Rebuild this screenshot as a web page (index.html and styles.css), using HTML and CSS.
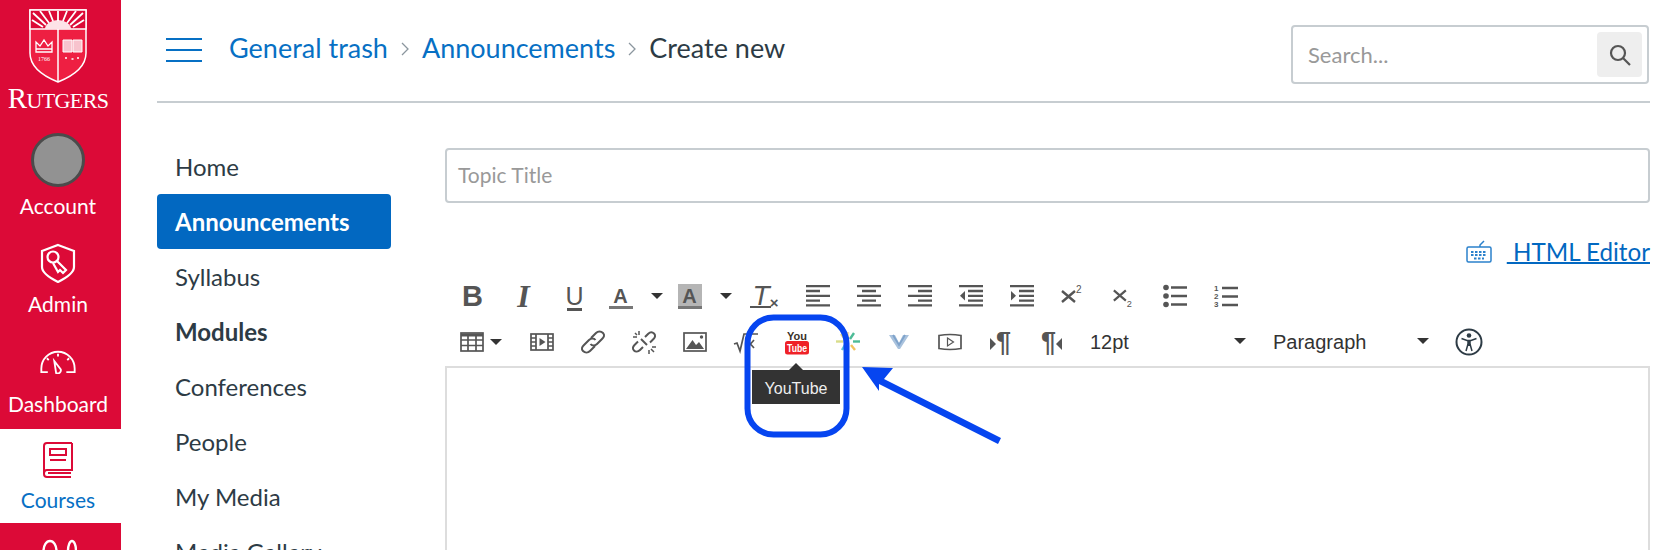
FILE: index.html
```html
<!DOCTYPE html>
<html lang="en">
<head>
<meta charset="utf-8">
<title>Create new</title>
<link rel="stylesheet" href="styles.css">
</head>
<body>
<div class="app">
  <aside class="sidebar">
    <div class="logo">
      <svg class="shield" viewBox="0 0 58 74" width="58" height="74">
        <path d="M1 1H57V44C57 58 44 67 29 73C14 67 1 58 1 44Z" fill="#ee1f42" stroke="#fff" stroke-width="1.5"/>
        <path d="M1 1H57V20H1Z" fill="#dc0a37" stroke="#fff" stroke-width="1.5"/>
        <path d="M29 19V73" stroke="#fff" stroke-width="1.5"/>
        <path d="M16 20a13 9 0 0 1 26 0Z" fill="#fde3e8"/>
        <path d="M29 12V2M24 12L20 2M34 12L38 2M20 14L11 2M38 14L47 2M17 16L4 4M41 16L54 4M14 18L3 11M44 18L55 11" stroke="#fff" stroke-width="1.8"/>
        <path d="M7 43V33L11 37L15 31L19 37L23 33V43ZM7 40H23" fill="none" stroke="#fff" stroke-width="1.3"/>
        <text class="year" x="15" y="52" text-anchor="middle">1766</text>
        <path d="M34 31H43V43H34ZM44 31H53V43H44Z" fill="#f7c3cd" stroke="#fff"/>
        <path d="M36 49h2M42.500 50h2M48 49h2" stroke="#fff" stroke-width="1.6"/>
      </svg>
      <div class="wordmark"><span class="big-r">R</span>UTGERS</div>
    </div>
    <a class="side-item account"><span class="avatar"></span><span class="side-label">Account</span></a>
    <a class="side-item admin">
      <svg viewBox="0 0 36 40" width="36" height="40" fill="none" stroke="#fff" stroke-width="2.200">
        <path d="M18 2L34 8V24C34 30 26 35 18 39C10 35 2 30 2 24V8Z"/>
        <circle cx="13" cy="14" r="5.500"/>
        <path d="M17 18L26 27L23 30L20 27L18 29L13 20"/>
      </svg>
      <span class="side-label">Admin</span>
    </a>
    <a class="side-item dashboard">
      <svg viewBox="0 0 40 27" width="38" height="25" fill="none" stroke="#fff" stroke-width="2">
        <path d="M9 25H2V21A18 18 0 0 1 38 21V25H29"/>
        <path d="M16 13L23 22A3.500 3.500 0 0 1 18 26Z"/>
        <path d="M20 5V8M8 10L10 12M32 10L30 12"/>
      </svg>
      <span class="side-label">Dashboard</span>
    </a>
    <a class="side-item courses">
      <svg viewBox="0 0 30 36" width="30" height="36" fill="none" stroke="#dc0a37" stroke-width="2">
        <path d="M29 1H4C2 1 1 2 1 4V32C1 34 2 35 4 35H28M29 1V28H4C2 28 1 30 1 32M28 31H5"/>
        <path d="M7 7H23V13H7ZM7 18H23"/>
      </svg>
      <span class="side-label">Courses</span>
    </a>
    <a class="side-item groups">
      <svg viewBox="0 0 38 30" width="38" height="30" fill="none" stroke="#fff" stroke-width="2.400">
        <ellipse cx="11" cy="12" rx="6.500" ry="10"/><ellipse cx="33" cy="12" rx="4" ry="10"/>
      </svg>
    </a>
  </aside>

  <main class="page">
    <header class="topbar">
      <button class="hamburger" aria-label="Menu"><i></i><i></i><i></i></button>
      <nav class="crumbs">
        <a>General trash</a>
        <svg class="sep" viewBox="0 0 10 14" width="10" height="14"><path d="M2 1L8 7L2 13"/></svg>
        <a>Announcements</a>
        <svg class="sep" viewBox="0 0 10 14" width="10" height="14"><path d="M2 1L8 7L2 13"/></svg>
        <span class="current">Create new</span>
      </nav>
      <div class="search">
        <span class="search-text">Search...</span>
        <span class="search-btn">
          <svg viewBox="0 0 24 24" width="24" height="24" fill="none" stroke="#555" stroke-width="2.200"><circle cx="10" cy="10" r="7"/><path d="M15 15L22 22"/></svg>
        </span>
      </div>
    </header>

    <div class="layout">
      <nav class="course-nav">
        <a>Home</a>
        <a class="active">Announcements</a>
        <a>Syllabus</a>
        <a class="strong">Modules</a>
        <a>Conferences</a>
        <a>People</a>
        <a>My Media</a>
        <a>Media Gallery</a>
      </nav>

      <section class="content">
        <div class="topic">Topic Title</div>
        <div class="editor-switch">
          <svg viewBox="0 0 26 24" width="26" height="24" fill="none" stroke="#2b81cc" stroke-width="1.500">
            <rect x="1" y="8" width="24" height="15" rx="1.500"/>
            <path d="M14 8V6L18 2"/>
            <path d="M5 13h16M5 16h16M8 19.500h10" stroke-width="2.200" stroke-dasharray="2.500 1.500"/>
          </svg>
          <a>&nbsp;HTML Editor</a>
        </div>

        <div class="toolbar">
          <div class="tool-row">
            <span class="tool glyph bold">B</span>
            <span class="tool glyph italic">I</span>
            <span class="tool glyph under">U</span>
            <span class="tool color-first"><span class="color-a">A</span></span><span class="caret-slot"><i class="caret"></i></span>
            <span class="tool color-second"><span class="color-a shaded">A</span></span><span class="caret-slot"><i class="caret"></i></span>
            <span class="tool clear"><span class="clear-t">T</span><span class="clear-x">×</span></span>
            <span class="tool"><svg class="ico lines" viewBox="0 0 24 22"><path d="M0 1.200H24M0 6H14M0 10.800H24M0 15.600H14M0 20.400H24"/></svg></span>
            <span class="tool"><svg class="ico lines" viewBox="0 0 24 22"><path d="M0 1.200H24M5 6H19M0 10.800H24M5 15.600H19M0 20.400H24"/></svg></span>
            <span class="tool"><svg class="ico lines" viewBox="0 0 24 22"><path d="M0 1.200H24M10 6H24M0 10.800H24M10 15.600H24M0 20.400H24"/></svg></span>
            <span class="tool"><svg class="ico lines" viewBox="0 0 24 22"><path d="M0 1.200H24M9 6H24M9 10.800H24M9 15.600H24M0 20.400H24"/><path class="fill" d="M6 6V15.600L1 10.800Z"/></svg></span>
            <span class="tool"><svg class="ico lines" viewBox="0 0 24 22"><path d="M0 1.200H24M9 6H24M9 10.800H24M9 15.600H24M0 20.400H24"/><path class="fill" d="M1 6V15.600L6 10.800Z"/></svg></span>
            <span class="tool"><svg class="ico square" viewBox="0 0 24 24"><path d="M1 7L14 18M14 7L1 18"/><text class="script-num" x="15" y="9">2</text></svg></span>
            <span class="tool"><svg class="ico square" viewBox="0 0 24 26"><path d="M1 7L14 18M14 7L1 18"/><text class="script-num" x="15" y="25">2</text></svg></span>
            <span class="tool"><svg class="ico" viewBox="0 0 24 22"><circle class="fill" cx="3" cy="2.500" r="2.800"/><circle class="fill" cx="3" cy="11" r="2.800"/><circle class="fill" cx="3" cy="19.500" r="2.800"/><path d="M8 2.500H24M8 11H24M8 19.500H24"/></svg></span>
            <span class="tool"><svg class="ico square" viewBox="0 0 24 24"><text class="nums" x="0" y="7">1</text><text class="nums" x="0" y="15">2</text><text class="nums" x="0" y="23">3</text><path d="M8 4H24M8 12.500H24M8 21H24"/></svg></span>
          </div>
          <div class="tool-row">
            <span class="tool table-tool"><svg class="ico thin" viewBox="0 0 24 20"><rect x="1" y="1" width="22" height="18"/><path d="M1 3H23" stroke-width="3"/><path d="M1 8H23M1 13.500H23M8 2V19M16 2V19"/></svg><i class="caret"></i></span>
            <span class="tool"><svg class="ico thin" viewBox="0 0 24 18"><rect x="1" y="1" width="22" height="16"/><path d="M6 1V17M18 1V17M1 5H6M1 9H6M1 13H6M18 5H23M18 9H23M18 13H23"/><path class="fill" d="M9.500 5L15.500 9L9.500 13Z"/></svg></span>
            <span class="tool"><svg class="ico thin wide" viewBox="0 0 24 24"><path d="M10 8L15 3C17 1 20 1 22 3S23 7 21 9L16 14C14 16 11 16 9.500 14"/><path d="M14 16L9 21C7 23 4 23 2 21S1 17 3 15L8 10C10 8 13 8 14.500 10"/></svg></span>
            <span class="tool"><svg class="ico thin wide" viewBox="0 0 24 24"><path d="M13 7L16 4C18 2 20.500 2 22 3.500S23.500 7 21.500 9L18 12.500"/><path d="M11 17L8 20C6 22 3.500 22 2 20.500S.5 17 2.500 15L6 11.500"/><path d="M9 9L15 15"/><path d="M7 1V5M1 7H5M19 19L22 22M17 20V24M20 17H24M3 3L5 5" stroke-width="1.500"/></svg></span>
            <span class="tool"><svg class="ico thin" viewBox="0 0 24 20"><rect x="1" y="1" width="22" height="18"/><path class="fill" d="M3 17L9.500 8L13 13L16 10L21 17Z"/><circle class="fill" cx="18.500" cy="5" r="1.700"/></svg></span>
            <span class="tool"><svg class="ico thin" viewBox="0 0 24 20"><path d="M0 12L3 11L6 19L10 2H24"/><path d="M13 8L20 16M20 8L13 16"/></svg></span>
            <span class="tool"><svg class="yt" viewBox="0 -2 24 26" width="24" height="26"><text class="yt-you" x="12" y="8.500" text-anchor="middle">You</text><rect x="0" y="10" width="24" height="13.500" rx="2.500" fill="#ef2127"/><text class="yt-tube" x="12" y="21" text-anchor="middle" textLength="20" lengthAdjust="spacingAndGlyphs">Tube</text></svg></span>
            <span class="tool"><svg class="burst" viewBox="0 0 24 24" width="24" height="24" stroke-width="2.400" fill="none"><path stroke="#d9dd8b" d="M0 11.500H7"/><path stroke="#4dbb96" d="M17 11.500H24"/><path stroke="#4cbb96" d="M14 9L18 3"/><path stroke="#f2c35f" d="M12 2V8" opacity=".5"/><path stroke="#58c4dc" d="M9.500 14L6 20"/><path stroke="#f2c35f" d="M15 15L19 20"/><path stroke="#4cc3dc" d="M12 16V22" opacity=".5"/><path stroke="#e6d88a" d="M9 9L5 4"/></svg></span>
            <span class="tool"><svg viewBox="0 0 20 16" width="20" height="16"><path d="M0 1H6L10 9L14 1H20L11 15H9Z" fill="#a9c2dd"/><path d="M4 1L10 11L16 1" fill="none" stroke="#7fa3cb" stroke-width="1.800"/></svg></span>
            <span class="tool"><svg class="ico thin" viewBox="0 0 24 18"><path d="M1 2.500Q12 .5 23 2.500V15.500Q12 17.500 1 15.500Z"/><path d="M9.500 5L15.500 9L9.500 13Z" stroke-width="1.200"/></svg></span>
            <span class="tool"><i class="tri-r"></i><span class="pilcrow">¶</span></span>
            <span class="tool"><span class="pilcrow">¶</span><i class="tri-l"></i></span>
            <span class="select"><span>12pt</span><i class="caret"></i></span>
            <span class="select"><span>Paragraph</span><i class="caret"></i></span>
            <span class="tool"><svg viewBox="0 0 28 28" width="28" height="28" fill="none" stroke="#2d3b45"><circle cx="14" cy="14" r="12.500" stroke-width="2"/><circle cx="14" cy="7.500" r="2.300" fill="#2d3b45" stroke="none"/><path d="M6.500 10.500L12 12.500H16L21.500 10.500M11 23L13 16M17 23L15 16" stroke-width="1.500"/><path d="M14 12V18" stroke-width="3.500"/></svg></span>
          </div>
          <div class="tooltip">YouTube</div>
        </div>
        <div class="editor"></div>
      </section>
    </div>
  </main>
</div>

<svg class="markup" viewBox="0 0 1677 550" width="1677" height="550" aria-hidden="true">
  <rect x="747.500" y="317.500" width="99" height="117" rx="26" fill="none" stroke="#0645f0" stroke-width="6"/>
  <path d="M862 367L893 368L884 379L1001 438L998 444L879 384L879 391Z" fill="#0645f0"/>
</svg>
</body>
</html>
```
FILE: styles.css
```css
* { box-sizing: border-box; }
html, body { margin: 0; height: 550px; overflow: hidden; background: #fff; }
body { font-family: Lato, "Liberation Sans", sans-serif; color: #2d3b45; position: relative; }
a { color: inherit; text-decoration: none; }
i { font-style: normal; }

.app { display: flex; height: 550px; overflow: hidden; }

/* Global sidebar */
.sidebar { width: 121px; flex: none; background: #dc0a37; color: #fff; display: flex; flex-direction: column; overflow: hidden; }
.logo { height: 122px; flex: none; padding: 9px 5px 0 0; display: flex; flex-direction: column; align-items: center; width: 100%; }
.shield { display: block; flex: none; }
.year { font: 6px "Liberation Serif", serif; fill: #fff; }
.wordmark { font: 22px/26px "Liberation Serif", serif; color: #fff; letter-spacing: -.6px; margin-top: 2px; white-space: nowrap; }
.big-r { font-size: 29px; }
.side-item { width: 100%; display: flex; flex-direction: column; align-items: center; font-size: 21px; padding-right: 5px; flex: none; }
.side-label { line-height: 24px; }
.account { height: 99px; padding-top: 11px; }
.avatar { width: 54px; height: 54px; border-radius: 50%; background: #929292; border: 3px solid #4b4b4b; margin-bottom: 7px; flex: none; }
.admin { height: 98px; padding-top: 22px; }
.admin .side-label { margin-top: 9px; }
.dashboard { height: 110px; padding-top: 30px; }
.dashboard .side-label { margin-top: 18px; }
.courses { height: 94px; background: #fff; color: #0770c4; padding-top: 13px; }
.courses .side-label { margin-top: 10px; }
.groups { padding-top: 16px; }

/* Page */
.page { flex: 1; min-width: 0; padding: 0 27px 0 36px; }
.topbar { height: 103px; border-bottom: 2px solid #c7cdd1; display: flex; align-items: center; padding: 0 1px 5px 9px; }
.hamburger { width: 36px; height: 24px; padding: 0; border: 0; background: none; display: flex; flex-direction: column; justify-content: space-between; margin: 4px 27px 0 0; }
.hamburger i { display: block; height: 2px; background: #0770c4; }
.crumbs { display: flex; align-items: center; font-size: 27px; color: #0770c4; flex: 1; margin-top: -1px; }
.sep { fill: none; stroke: #8b969e; stroke-width: 1.300; margin: 2px 12px 0; flex: none; }
.current { color: #2d3b45; }
.search { width: 358px; height: 59px; border: 2px solid #c7cdd1; border-radius: 4px; display: flex; align-items: center; justify-content: space-between; padding: 0 5px 0 15px; margin-top: 13px; }
.search-text { font-size: 22px; color: #999; }
.search-btn { width: 45px; height: 45px; background: #eee; border-radius: 4px; display: flex; align-items: center; justify-content: center; }

.layout { display: flex; gap: 54px; }

/* Course nav */
.course-nav { width: 234px; flex: none; padding-top: 36px; display: flex; flex-direction: column; }
.course-nav a { height: 55px; flex: none; line-height: 55px; padding-left: 18px; font-size: 24px; white-space: nowrap; }
.course-nav .active { background: #0268c1; color: #fff; font-weight: 700; border-radius: 4px; }
.course-nav .strong { font-weight: 700; }

/* Editor column */
.content { flex: 1; min-width: 0; padding-top: 45px; position: relative; }
.topic { height: 55px; border: 2px solid #c7cdd1; border-radius: 4px; line-height: 49px; padding-left: 11px; font-size: 21px; color: #999; }
.editor-switch { height: 32px; margin: 32px 0 6px; display: flex; justify-content: flex-end; align-items: center; gap: 15px; }
.editor-switch a { color: #0268c1; font-size: 24.200px; text-decoration: underline; text-decoration-thickness: 2px; }

.toolbar { position: relative; padding-left: 2px; }
.tool-row { height: 46px; display: flex; align-items: center; }
.tool { width: 51px; height: 30px; flex: none; display: flex; align-items: center; justify-content: center; color: #555; position: relative; }
.color-first { margin-left: -5px; }
.color-second { margin-left: -3px; }
.caret-slot { width: 21px; flex: none; display: flex; justify-content: center; }
.caret { display: block; width: 0; height: 0; border-left: 6px solid transparent; border-right: 6px solid transparent; border-top: 6px solid #333; }
.ico { width: 24px; height: 22px; fill: none; stroke: #555; stroke-width: 2.400; overflow: visible; }
.ico.lines { stroke-width: 2.300; }
.ico.square { height: 24px; }
.ico.thin { stroke-width: 1.700; }
.ico.wide { height: 24px; stroke-width: 2; }
.ico .fill { fill: #555; stroke: none; }
.glyph { font-family: "Liberation Sans", sans-serif; }
.bold { font-size: 29px; font-weight: 700; }
.italic { font-size: 32px; font-style: italic; font-weight: 700; font-family: "Liberation Serif", serif; }
.under { font-size: 25px; }
.under::after { content: ""; position: absolute; left: 18px; right: 18px; bottom: 0; height: 3px; background: #555; }
.color-a { font: 700 20px/25px "Liberation Sans", sans-serif; width: 24px; height: 25px; text-align: center; border-bottom: 3px solid #777; }
.shaded { background: #b5b5b5; }
.clear { margin-left: 5px; padding-right: 2px; }
.clear-t { font: italic 28px/28px "Liberation Sans", sans-serif; position: relative; }
.clear-t::after { content: ""; position: absolute; left: -3px; right: -1px; bottom: 2px; height: 2px; background: #555; }
.clear-x { font: 700 15px "Liberation Sans", sans-serif; align-self: flex-end; }
.script-num { font: 10px "Liberation Sans", sans-serif; fill: #555; stroke: none; }
.nums { font: 700 8px "Liberation Sans", sans-serif; fill: #555; stroke: none; }
.table-tool { width: 69px; justify-content: flex-start; padding-left: 13px; gap: 6px; }
.yt-you { font: 700 11px "Liberation Sans", sans-serif; fill: #3a3128; }
.yt-tube { font: 700 11px "Liberation Sans", sans-serif; fill: #fff; }
.pilcrow { font: 700 27px/30px "Liberation Sans", sans-serif; color: #555; }
.tri-r, .tri-l { width: 0; height: 0; border-top: 6px solid transparent; border-bottom: 6px solid transparent; }
.tri-r { border-left: 6px solid #555; margin-top: 4px; }
.tri-l { border-right: 6px solid #555; margin-top: 4px; }
.select { width: 183px; height: 30px; flex: none; padding: 0 14px 0 13px; display: flex; align-items: center; justify-content: space-between; font: 20px "Liberation Sans", sans-serif; color: #333; }
.select .caret { margin-top: -3px; }

.tooltip { position: absolute; left: 307px; top: 97px; width: 88px; height: 34px; background: #333; color: #eee; font: 16px/37px "Liberation Sans", sans-serif; text-align: center; }
.tooltip::before { content: ""; position: absolute; left: 37px; top: -7px; border-left: 7px solid transparent; border-right: 7px solid transparent; border-bottom: 7px solid #333; }

.editor { height: 200px; border: 2px solid #ddd; margin-top: 1px; }

/* Reviewer's annotation drawn over the screenshot */
.markup { position: absolute; left: 0; top: 0; pointer-events: none; }
```
